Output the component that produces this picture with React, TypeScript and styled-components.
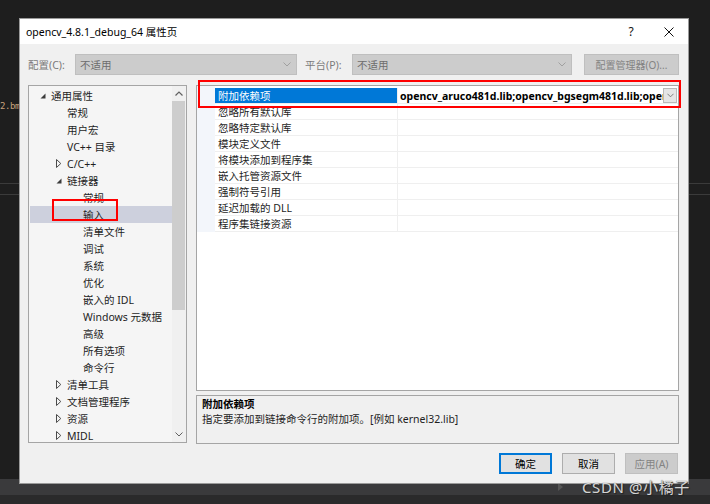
import React from "react";
import styled, { createGlobalStyle } from "styled-components";

const UI_FONT = `"Noto Sans", "Noto Sans CJK SC", sans-serif`;

const GlobalStyle = createGlobalStyle`
  html, body { margin: 0; padding: 0; background: #1e1e1e; }
  body { width: 710px; height: 504px; overflow: hidden; }
  *, *::before, *::after { box-sizing: border-box; }
`;

/* ---------- background (editor behind the dialog) ---------- */
const Desktop = styled.div`
  position: relative;
  width: 710px;
  height: 504px;
  overflow: hidden;
  display: flex;
  flex-direction: column;
  background: #1e1e1e;
`;

const Editor = styled.div`
  flex: 1;
  display: flex;
  flex-direction: column;
`;

const CodeLine = styled.div`
  margin-top: 99px;
  width: 19px;
  height: 14px;
  line-height: 14px;
  font-family: "DejaVu Sans Mono", "Liberation Mono", monospace;
  font-size: 9px;
  letter-spacing: -0.4px;
  color: #c8a27c;
  white-space: pre;
`;

const EditorRule = styled.div<{ $gap: number }>`
  margin-top: ${(p) => p.$gap}px;
  height: 1px;
  background: #3b3b3b;
`;

const StatusBar = styled.div`
  height: 16px;
  flex: none;
  background: #3a3a3c;
  display: flex;
  align-items: center;
  padding-left: 558px;
`;

const BottomStrip = styled.div`
  height: 9px;
  flex: none;
  background: #2a2a2b;
`;

const Watermark = styled.div`
  position: absolute;
  left: 582px;
  top: 478px;
  font-family: "Noto Sans", "Noto Sans CJK SC", sans-serif;
  font-size: 15px;
  line-height: 18px;
  color: rgba(235, 235, 235, 0.9);
  text-shadow: 0 0 1px #333, 1px 1px 1px #222;
  white-space: nowrap;
  letter-spacing: 0.6px;
`;

/* ---------- dialog ---------- */
const Dialog = styled.div`
  position: absolute;
  left: 19px;
  top: 18px;
  width: 670px;
  height: 466px;
  border: 1px solid #9a9a9a;
  background: #f0f0f0;
  display: flex;
  flex-direction: column;
  font-family: ${UI_FONT};
  font-size: 10.5px;
  color: #1b1b1b;
`;

const TitleBar = styled.div`
  height: 25px;
  flex: none;
  background: #ffffff;
  display: flex;
  align-items: center;
  padding-left: 6px;
`;

const TitleText = styled.div`
  flex: 1;
  font-size: 10.5px;
  color: #000;
  white-space: nowrap;
`;

const CaptionButton = styled.div`
  width: 38px;
  height: 25px;
  display: flex;
  align-items: center;
  justify-content: center;
  font-size: 12px;
  color: #111;
`;

const Body = styled.div`
  flex: 1;
  display: flex;
  flex-direction: column;
  padding: 10px 9px 9px 8px;
`;

const ConfigRow = styled.div`
  height: 21px;
  display: flex;
  align-items: center;
`;

const ConfigLabel = styled.div<{ $ml?: number }>`
  width: 47px;
  margin-left: ${(p) => p.$ml ?? 0}px;
  color: #7a7a7a;
  white-space: nowrap;
`;

const Combo = styled.div<{ $w: number }>`
  width: ${(p) => p.$w}px;
  height: 21px;
  background: #cccccc;
  border: 1px solid #bfbfbf;
  display: flex;
  align-items: center;
  justify-content: space-between;
  padding: 0 5px 0 4px;
  color: #6d6d6d;
`;

const GrayButton = styled.div<{ $w: number; $ml?: number }>`
  width: ${(p) => p.$w}px;
  margin-left: ${(p) => p.$ml ?? 0}px;
  height: 21px;
  background: #cccccc;
  border: 1px solid #bfbfbf;
  display: flex;
  align-items: center;
  justify-content: center;
  color: #838383;
  white-space: nowrap;
  font-size: 10px;
`;

const Main = styled.div`
  margin-top: 10px;
  height: 359px;
  display: flex;
  gap: 9px;
`;

/* tree */
const TreePanel = styled.div`
  width: 159px;
  height: 358px;
  border: 1px solid #a5a5a5;
  background: #f5f5f5;
  display: flex;
  overflow: hidden;
`;

const TreeList = styled.div`
  flex: 1;
  padding-top: 1px;
  overflow: hidden;
`;

const TreeRow = styled.div<{ $level: number; $selected?: boolean }>`
  height: 17px;
  display: flex;
  align-items: center;
  padding-left: ${(p) => 9 + p.$level * 16}px;
  margin-left: 1px;
  background: ${(p) => (p.$selected ? "#cdd0dd" : "transparent")};
  white-space: nowrap;
  color: #1e1e1e;
`;

const Expander = styled.div`
  width: 12px;
  height: 17px;
  display: flex;
  align-items: center;
  flex: none;
`;

const ScrollBar = styled.div`
  width: 14px;
  flex: none;
  background: #f0f0f0;
  display: flex;
  flex-direction: column;
`;

const ScrollArrow = styled.div`
  height: 15px;
  display: flex;
  align-items: center;
  justify-content: center;
  flex: none;
`;

const ScrollTrack = styled.div`
  flex: 1;
  display: flex;
  flex-direction: column;
`;

const ScrollThumb = styled.div`
  height: 209px;
  margin: 0 1px 0 0;
  background: #cdcdcd;
`;

/* right column */
const RightColumn = styled.div`
  width: 483px;
  display: flex;
  flex-direction: column;
  gap: 4px;
`;

const Grid = styled.div`
  height: 306px;
  border: 1px solid #a5a5a5;
  background: #ffffff;
  overflow: hidden;
`;

const GridRows = styled.div`
  padding-top: 2px;
  background: linear-gradient(to right, #f3f6fb 18px, #ffffff 18px);
`;

const GridRow = styled.div`
  height: 16px;
  margin-left: 18px;
  display: flex;
  border-bottom: 1px solid #efefef;
`;

const NameCell = styled.div<{ $selected?: boolean }>`
  width: 183px;
  flex: none;
  padding-left: 3px;
  display: flex;
  align-items: center;
  border-right: 1px solid #efefef;
  background: ${(p) => (p.$selected ? "#0078d7" : "transparent")};
  color: ${(p) => (p.$selected ? "#ffffff" : "#1e1e1e")};
  white-space: nowrap;
`;

const ValueCell = styled.div`
  flex: 1;
  min-width: 0;
  display: flex;
  align-items: center;
  padding-left: 2px;
  padding-right: 1px;
`;

const ValueText = styled.div`
  flex: 1;
  min-width: 0;
  overflow: hidden;
  white-space: nowrap;
  font-weight: 700;
  color: #000;
`;

const DropButton = styled.div`
  width: 14px;
  height: 15px;
  flex: none;
  background: #e5e5e5;
  border: 1px solid #b9b9b9;
  display: flex;
  align-items: center;
  justify-content: center;
`;

const DescBox = styled.div`
  height: 49px;
  border: 1px solid #a5a5a5;
  background: #f0f0f0;
  padding: 1px 5px;
  line-height: 15px;
`;

const DescTitle = styled.div`
  font-weight: 700;
  color: #000;
`;

const DescText = styled.div`
  color: #1e1e1e;
  white-space: nowrap;
`;

const ButtonRow = styled.div`
  margin-top: 9px;
  height: 21px;
  display: flex;
  justify-content: flex-end;
  gap: 10px;
  padding-right: 1px;
`;

const DialogButton = styled.div<{ $variant: "default" | "normal" | "disabled" }>`
  width: 53px;
  height: 21px;
  display: flex;
  align-items: center;
  justify-content: center;
  background: ${(p) => (p.$variant === "disabled" ? "#cccccc" : "#e1e1e1")};
  border: ${(p) =>
    p.$variant === "default"
      ? "2px solid #0078d7"
      : p.$variant === "disabled"
      ? "1px solid #bfbfbf"
      : "1px solid #adadad"};
  color: ${(p) => (p.$variant === "disabled" ? "#838383" : "#000")};
`;

/* annotation overlays */
const RedBox = styled.div`
  position: absolute;
  border: 2px solid #ff0000;
  pointer-events: none;
`;

/* ---------- icons ---------- */
const ChevronDown = ({ color = "#9a9a9a", w = 8 }: { color?: string; w?: number }) => (
  <svg width={w} height={5} viewBox="0 0 8 5">
    <polyline points="0.5,0.5 4,4 7.5,0.5" fill="none" stroke={color} strokeWidth="1" />
  </svg>
);

const ChevronUp = ({ color = "#606060" }: { color?: string }) => (
  <svg width={8} height={5} viewBox="0 0 8 5">
    <polyline points="0.5,4.5 4,1 7.5,4.5" fill="none" stroke={color} strokeWidth="1.2" />
  </svg>
);

const Expanded = () => (
  <svg width={6} height={6} viewBox="0 0 6 6" style={{ marginLeft: 1 }}>
    <polygon points="5.5,0.5 5.5,5.5 0.5,5.5" fill="#3c3c3c" />
  </svg>
);

const Collapsed = () => (
  <svg width={6} height={9} viewBox="0 0 6 9" style={{ marginLeft: 1 }}>
    <polygon points="0.5,0.5 4.8,4.5 0.5,8.5" fill="none" stroke="#4a4a4a" strokeWidth="1" />
  </svg>
);

const CloseIcon = () => (
  <svg width={10} height={10} viewBox="0 0 10 10">
    <line x1="0.5" y1="0.5" x2="9.5" y2="9.5" stroke="#111" strokeWidth="1" />
    <line x1="9.5" y1="0.5" x2="0.5" y2="9.5" stroke="#111" strokeWidth="1" />
  </svg>
);

const StatusArrow = () => (
  <svg width={5} height={8} viewBox="0 0 5 8">
    <polygon points="0,0 5,4 0,8" fill="#555" />
  </svg>
);

/* ---------- data ---------- */
type TreeItem = { label: string; level: number; state?: "open" | "closed"; selected?: boolean };

const treeItems: TreeItem[] = [
  { label: "通用属性", level: 0, state: "open" },
  { label: "常规", level: 1 },
  { label: "用户宏", level: 1 },
  { label: "VC++ 目录", level: 1 },
  { label: "C/C++", level: 1, state: "closed" },
  { label: "链接器", level: 1, state: "open" },
  { label: "常规", level: 2 },
  { label: "输入", level: 2, selected: true },
  { label: "清单文件", level: 2 },
  { label: "调试", level: 2 },
  { label: "系统", level: 2 },
  { label: "优化", level: 2 },
  { label: "嵌入的 IDL", level: 2 },
  { label: "Windows 元数据", level: 2 },
  { label: "高级", level: 2 },
  { label: "所有选项", level: 2 },
  { label: "命令行", level: 2 },
  { label: "清单工具", level: 1, state: "closed" },
  { label: "文档管理程序", level: 1, state: "closed" },
  { label: "资源", level: 1, state: "closed" },
  { label: "MIDL", level: 1, state: "closed" },
];

const gridRows = [
  "附加依赖项",
  "忽略所有默认库",
  "忽略特定默认库",
  "模块定义文件",
  "将模块添加到程序集",
  "嵌入托管资源文件",
  "强制符号引用",
  "延迟加载的 DLL",
  "程序集链接资源",
];

const depValue =
  "opencv_aruco481d.lib;opencv_bgsegm481d.lib;opencv_bioinspired481d.lib;opencv_calib3d481d.lib";

export default function App() {
  return (
    <>
      <GlobalStyle />
      <Desktop>
        <Editor>
          <CodeLine>2.bm</CodeLine>
          <EditorRule $gap={70} />
          <EditorRule $gap={10} />
        </Editor>
        <StatusBar>
          <StatusArrow />
        </StatusBar>
        <BottomStrip />

        <Dialog>
          <TitleBar>
            <TitleText>opencv_4.8.1_debug_64 属性页</TitleText>
            <CaptionButton>?</CaptionButton>
            <CaptionButton>
              <CloseIcon />
            </CaptionButton>
          </TitleBar>
          <Body>
            <ConfigRow>
              <ConfigLabel>配置(C):</ConfigLabel>
              <Combo $w={222}>
                <span>不适用</span>
                <ChevronDown color="#a0a0a0" />
              </Combo>
              <ConfigLabel $ml={8}>平台(P):</ConfigLabel>
              <Combo $w={220}>
                <span>不适用</span>
                <ChevronDown color="#a0a0a0" />
              </Combo>
              <GrayButton $w={95} $ml={12}>
                配置管理器(O)...
              </GrayButton>
            </ConfigRow>

            <Main>
              <TreePanel>
                <TreeList>
                  {treeItems.map((it, i) => (
                    <TreeRow key={i} $level={it.level} $selected={it.selected}>
                      <Expander>
                        {it.state === "open" ? <Expanded /> : it.state === "closed" ? <Collapsed /> : null}
                      </Expander>
                      {it.label}
                    </TreeRow>
                  ))}
                </TreeList>
                <ScrollBar>
                  <ScrollArrow>
                    <ChevronUp />
                  </ScrollArrow>
                  <ScrollTrack>
                    <ScrollThumb />
                  </ScrollTrack>
                  <ScrollArrow>
                    <ChevronDown color="#606060" />
                  </ScrollArrow>
                </ScrollBar>
              </TreePanel>

              <RightColumn>
                <Grid>
                  <GridRows>
                    {gridRows.map((name, i) => (
                      <GridRow key={i}>
                        <NameCell $selected={i === 0}>{name}</NameCell>
                        <ValueCell>
                          {i === 0 && (
                            <>
                              <ValueText>{depValue}</ValueText>
                              <DropButton>
                                <ChevronDown color="#707070" w={7} />
                              </DropButton>
                            </>
                          )}
                        </ValueCell>
                      </GridRow>
                    ))}
                  </GridRows>
                </Grid>
                <DescBox>
                  <DescTitle>附加依赖项</DescTitle>
                  <DescText>指定要添加到链接命令行的附加项。[例如 kernel32.lib]</DescText>
                </DescBox>
              </RightColumn>
            </Main>

            <ButtonRow>
              <DialogButton $variant="default">确定</DialogButton>
              <DialogButton $variant="normal">取消</DialogButton>
              <DialogButton $variant="disabled">应用(A)</DialogButton>
            </ButtonRow>
          </Body>
        </Dialog>

        <RedBox style={{ left: 198, top: 80, width: 483, height: 28 }} />
        <RedBox style={{ left: 52, top: 199, width: 66, height: 22 }} />
        <Watermark>CSDN @小橘子</Watermark>
      </Desktop>
    </>
  );
}
